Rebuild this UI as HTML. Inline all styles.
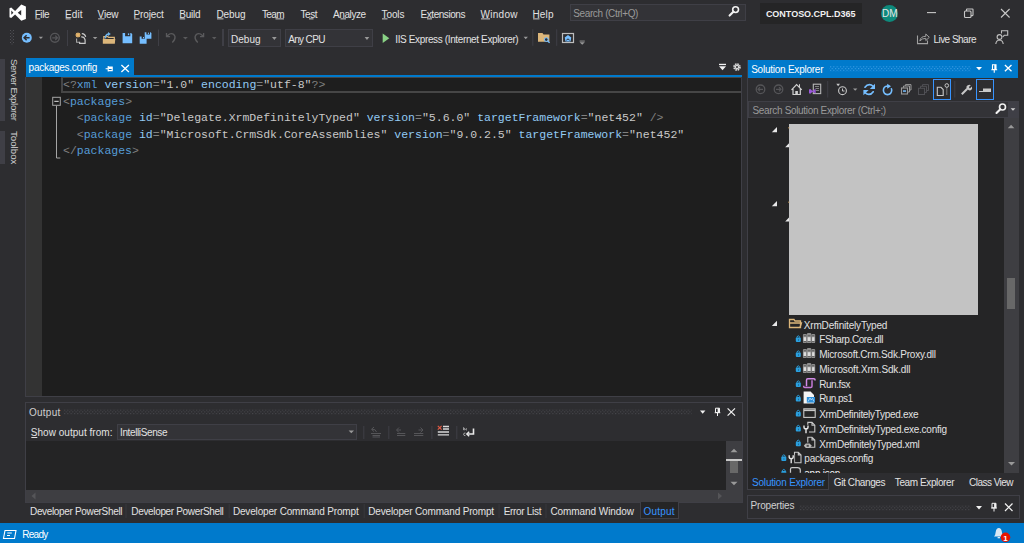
<!DOCTYPE html>
<html><head><meta charset="utf-8">
<style>
*{margin:0;padding:0;box-sizing:border-box}
html,body{width:1024px;height:543px;overflow:hidden;background:#2d2d30}
body{position:relative;font-family:"Liberation Sans",sans-serif;color:#f1f1f1}
.a{position:absolute}
.t{position:absolute;white-space:pre;line-height:1;font-size:10px}
.code{position:absolute;left:63px;top:77.4px;font-family:"Liberation Mono",monospace;font-size:11.5px;line-height:16.4px;white-space:pre;color:#c8c8c8}
.g{color:#808080}.b{color:#569cd6}.at{color:#92caf4}
.dotb{background-image:radial-gradient(circle,rgba(140,200,255,.55) 0.55px,transparent 0.95px);background-size:3px 3px}
.dotg{background-image:radial-gradient(circle,rgba(90,90,96,.9) 0.55px,transparent 0.95px);background-size:3px 3px}
svg{position:absolute;left:0;top:0}
</style></head><body>

<!-- ===== Title bar panels ===== -->
<div class="a" style="left:570px;top:4px;width:176px;height:17px;background:#333337;border:1px solid #3f3f46"></div>
<div class="a" style="left:760px;top:3px;width:102px;height:21px;background:#252526"></div>
<div class="a" style="left:881px;top:5px;width:17px;height:17px;border-radius:50%;background:#0e8a7c"></div>

<!-- ===== Toolbar panels ===== -->
<div class="a" style="left:228px;top:29px;width:53px;height:18px;background:#333337;border:1px solid #3f3f46"></div>
<div class="a" style="left:285px;top:29px;width:88px;height:18px;background:#333337;border:1px solid #3f3f46"></div>

<!-- ===== Left strip ===== -->
<div class="a" style="left:0;top:59px;width:5px;height:62px;background:#3f3f46"></div>
<div class="a" style="left:0;top:131px;width:5px;height:33px;background:#3f3f46"></div>
<span class="t" style="left:18.5px;top:59px;transform-origin:0 0;transform:rotate(90deg);font-size:9.7px;color:#d0d0d0;letter-spacing:-0.38px">Server Explorer</span>
<span class="t" style="left:18.5px;top:131px;transform-origin:0 0;transform:rotate(90deg);font-size:9.7px;color:#d0d0d0;letter-spacing:0px">Toolbox</span>

<!-- ===== Editor ===== -->
<div class="a" style="left:25px;top:77px;width:717px;height:320px;background:#1e1e1e;border:1px solid #3f3f46;border-top:none"></div>
<div class="a" style="left:26px;top:77px;width:16px;height:319px;background:#333333"></div>
<div class="a" style="left:26px;top:58px;width:108px;height:17px;background:#007acc"></div>
<div class="a" style="left:26px;top:75px;width:716px;height:2px;background:#007acc"></div>
<div class="a" style="left:61px;top:77px;width:680px;height:16px;border:2px solid #464646;border-right:none;border-top-width:1.6px"></div>
<div class="code"><span class="g">&lt;?</span><span class="b">xml</span> <span class="at">version</span><span class="g">=</span>"1.0" <span class="at">encoding</span><span class="g">=</span>"utf-8"<span class="g">?&gt;</span>
<span class="g">&lt;</span><span class="b">packages</span><span class="g">&gt;</span>
  <span class="g">&lt;</span><span class="b">package</span> <span class="at">id</span><span class="g">=</span>"Delegate.XrmDefinitelyTyped" <span class="at">version</span><span class="g">=</span>"5.6.0" <span class="at">targetFramework</span><span class="g">=</span>"net452" <span class="g">/&gt;</span>
  <span class="g">&lt;</span><span class="b">package</span> <span class="at">id</span><span class="g">=</span>"Microsoft.CrmSdk.CoreAssemblies" <span class="at">version</span><span class="g">=</span>"9.0.2.5" <span class="at">targetFramework</span><span class="g">=</span>"net452"
<span class="g">&lt;/</span><span class="b">packages</span><span class="g">&gt;</span></div>

<!-- ===== Output ===== -->
<div class="a" style="left:25px;top:402px;width:718px;height:101px;background:#2d2d30;border:1px solid #3f3f46"></div>
<div class="a" style="left:117px;top:424px;width:240px;height:16px;background:#333337;border:1px solid #3f3f46"></div>
<div class="a" style="left:26px;top:441px;width:700px;height:49px;background:#242425"></div>
<div class="a" style="left:26px;top:490px;width:716px;height:12px;background:#3e3e42"></div>
<div class="a" style="left:726px;top:441px;width:16px;height:49px;background:#3e3e42"></div>
<div class="a" style="left:730px;top:460px;width:8px;height:13px;background:#686868"></div>
<div class="a" style="left:726px;top:459px;width:16px;height:1.5px;background:#c8c8c8"></div>
<div class="a" style="left:640px;top:502px;width:39px;height:17px;background:#252526;border:1px solid #3f3f46;border-top:none"></div>

<!-- ===== Status bar ===== -->
<div class="a" style="left:0;top:523px;width:1024px;height:20px;background:#007acc"></div>

<!-- ===== Solution Explorer ===== -->
<div class="a" style="left:747px;top:60px;width:272px;height:430px;background:#2d2d30;border-left:1px solid #3f3f46"></div>
<div class="a" style="left:828px;top:472px;width:176px;height:1px;background:#3f3f46"></div>
<div class="a" style="left:748px;top:60px;width:270px;height:18px;background:#007acc"></div>
<div class="a" style="left:933px;top:79px;width:18px;height:21px;border:1px solid #3794ff"></div>
<div class="a" style="left:976px;top:79px;width:18px;height:21px;border:1px solid #3794ff"></div>
<div class="a" style="left:748px;top:101px;width:271px;height:17px;background:#333337;border:1px solid #3f3f46"></div>
<div class="a" style="left:1008px;top:102px;width:10px;height:15px;background:#3f3f46"></div>
<div class="a" style="left:748px;top:118px;width:271px;height:355px;background:#252526"></div>
<div class="a" style="left:789px;top:124px;width:189px;height:191px;background:#c3c3c3"></div>
<div class="a" style="left:1004px;top:118px;width:15px;height:354.5px;background:#3e3e42"></div>
<div class="a" style="left:1007px;top:278px;width:8px;height:31px;background:#686868"></div>
<div class="a" style="left:747px;top:473px;width:82px;height:17px;background:#252526;border:1px solid #3f3f46;border-top:none"></div>

<!-- Properties -->
<div class="a" style="left:747px;top:495px;width:273px;height:24px;background:#2d2d30;border:1px solid #3f3f46"></div>

<span class="t" style="left:34.7px;top:9.5px;letter-spacing:-0.44px;color:#e2e2e2;">File</span>
<span class="t" style="left:65.1px;top:9.5px;letter-spacing:0.06px;color:#e2e2e2;">Edit</span>
<span class="t" style="left:97.6px;top:9.5px;letter-spacing:-0.20px;color:#e2e2e2;">View</span>
<span class="t" style="left:133.5px;top:9.5px;letter-spacing:-0.14px;color:#e2e2e2;">Project</span>
<span class="t" style="left:179.2px;top:9.5px;letter-spacing:-0.23px;color:#e2e2e2;">Build</span>
<span class="t" style="left:216.5px;top:9.5px;letter-spacing:-0.12px;color:#e2e2e2;">Debug</span>
<span class="t" style="left:262.0px;top:9.5px;letter-spacing:-0.65px;color:#e2e2e2;">Team</span>
<span class="t" style="left:300.5px;top:9.5px;letter-spacing:-0.45px;color:#e2e2e2;">Test</span>
<span class="t" style="left:333.1px;top:9.5px;letter-spacing:-0.43px;color:#e2e2e2;">Analyze</span>
<span class="t" style="left:381.5px;top:9.5px;letter-spacing:-0.09px;color:#e2e2e2;">Tools</span>
<span class="t" style="left:420.5px;top:9.5px;letter-spacing:-0.44px;color:#e2e2e2;">Extensions</span>
<span class="t" style="left:480.5px;top:9.5px;letter-spacing:0.29px;color:#e2e2e2;">Window</span>
<span class="t" style="left:532.5px;top:9.5px;letter-spacing:0.14px;color:#e2e2e2;">Help</span>
<span class="t" style="left:573.2px;top:8.9px;letter-spacing:-0.36px;color:#999999;">Search (Ctrl+Q)</span>
<span class="t" style="left:765.9px;top:10.3px;letter-spacing:-0.02px;color:#f1f1f1;font-weight:bold;font-size:9px">CONTOSO.CPL.D365</span>
<span class="t" style="left:882.0px;top:9.2px;letter-spacing:0.15px;color:#e6e6e6;">DM</span>
<span class="t" style="left:231.1px;top:34.7px;letter-spacing:-0.02px;color:#e2e2e2;">Debug</span>
<span class="t" style="left:288.2px;top:34.7px;letter-spacing:-0.65px;color:#e2e2e2;">Any CPU</span>
<span class="t" style="left:395.3px;top:34.7px;letter-spacing:-0.37px;color:#e2e2e2;">IIS Express (Internet Explorer)</span>
<span class="t" style="left:933.4px;top:34.6px;letter-spacing:-0.52px;color:#e2e2e2;">Live Share</span>
<span class="t" style="left:28.6px;top:63.1px;letter-spacing:-0.26px;color:#ffffff;">packages.config</span>
<span class="t" style="left:751.2px;top:64.9px;letter-spacing:-0.24px;color:#ffffff;">Solution Explorer</span>
<span class="t" style="left:752.5px;top:105.9px;letter-spacing:-0.33px;color:#999999;">Search Solution Explorer (Ctrl+;)</span>
<span class="t" style="left:803.8px;top:320.5px;letter-spacing:-0.18px;color:#e2e2e2;">XrmDefinitelyTyped</span>
<span class="t" style="left:819.2px;top:335.1px;letter-spacing:-0.41px;color:#e2e2e2;">FSharp.Core.dll</span>
<span class="t" style="left:819.2px;top:350.0px;letter-spacing:-0.22px;color:#e2e2e2;">Microsoft.Crm.Sdk.Proxy.dll</span>
<span class="t" style="left:819.2px;top:364.9px;letter-spacing:-0.16px;color:#e2e2e2;">Microsoft.Xrm.Sdk.dll</span>
<span class="t" style="left:819.2px;top:379.7px;letter-spacing:-0.43px;color:#e2e2e2;">Run.fsx</span>
<span class="t" style="left:819.2px;top:394.3px;letter-spacing:-0.56px;color:#e2e2e2;">Run.ps1</span>
<span class="t" style="left:819.2px;top:409.8px;letter-spacing:-0.30px;color:#e2e2e2;">XrmDefinitelyTyped.exe</span>
<span class="t" style="left:819.2px;top:424.6px;letter-spacing:-0.26px;color:#e2e2e2;">XrmDefinitelyTyped.exe.config</span>
<span class="t" style="left:819.2px;top:439.5px;letter-spacing:-0.21px;color:#e2e2e2;">XrmDefinitelyTyped.xml</span>
<span class="t" style="left:804.3px;top:454.1px;letter-spacing:-0.23px;color:#e2e2e2;">packages.config</span>
<span class="t" style="left:752.0px;top:477.8px;letter-spacing:-0.19px;color:#3794ff;">Solution Explorer</span>
<span class="t" style="left:833.8px;top:477.8px;letter-spacing:-0.39px;color:#e2e2e2;">Git Changes</span>
<span class="t" style="left:894.8px;top:477.8px;letter-spacing:-0.40px;color:#e2e2e2;">Team Explorer</span>
<span class="t" style="left:969.1px;top:477.8px;letter-spacing:-0.54px;color:#e2e2e2;">Class View</span>
<span class="t" style="left:750.5px;top:501.3px;letter-spacing:-0.18px;color:#d0d0d0;">Properties</span>
<span class="t" style="left:29.0px;top:408.0px;letter-spacing:0.24px;color:#d0d0d0;">Output</span>
<span class="t" style="left:30.8px;top:428.1px;letter-spacing:0.03px;color:#e2e2e2;">Show output from:</span>
<span class="t" style="left:120.0px;top:428.1px;letter-spacing:-0.38px;color:#e2e2e2;">IntelliSense</span>
<span class="t" style="left:30.0px;top:506.7px;letter-spacing:-0.34px;color:#e2e2e2;">Developer PowerShell</span>
<span class="t" style="left:131.3px;top:506.7px;letter-spacing:-0.34px;color:#e2e2e2;">Developer PowerShell</span>
<span class="t" style="left:232.9px;top:506.7px;letter-spacing:-0.16px;color:#e2e2e2;">Developer Command Prompt</span>
<span class="t" style="left:368.3px;top:506.7px;letter-spacing:-0.16px;color:#e2e2e2;">Developer Command Prompt</span>
<span class="t" style="left:503.7px;top:506.7px;letter-spacing:-0.31px;color:#e2e2e2;">Error List</span>
<span class="t" style="left:550.4px;top:506.7px;letter-spacing:-0.06px;color:#e2e2e2;">Command Window</span>
<span class="t" style="left:643.5px;top:506.7px;letter-spacing:0.20px;color:#3794ff;">Output</span>
<span class="t" style="left:22.3px;top:530.0px;letter-spacing:-0.73px;color:#ffffff;">Ready</span>
<div class="a" style="left:748px;top:118px;width:256px;height:354.7px;overflow:hidden"><span class="t" style="left:56.3px;top:351px;letter-spacing:-0.25px;color:#f1f1f1">app.json</span></div>

<svg width="1024" height="543" viewBox="0 0 1024 543">
<defs>
<pattern id="pb" patternUnits="userSpaceOnUse" x="830" y="66.3" width="3.3" height="3.5"><rect x="0" y="0" width="1.1" height="1.1" fill="rgba(120,190,255,0.5)"/><rect x="1.65" y="1.75" width="1.1" height="1.1" fill="rgba(120,190,255,0.5)"/></pattern>
<pattern id="pg" patternUnits="userSpaceOnUse" x="64" y="409.6" width="3.3" height="3.5"><rect x="0" y="0" width="1.1" height="1.1" fill="rgba(80,80,86,0.75)"/><rect x="1.65" y="1.75" width="1.1" height="1.1" fill="rgba(80,80,86,0.75)"/></pattern>
<pattern id="pg2" patternUnits="userSpaceOnUse" x="800" y="505.6" width="3.3" height="3.5"><rect x="0" y="0" width="1.1" height="1.1" fill="rgba(80,80,86,0.75)"/><rect x="1.65" y="1.75" width="1.1" height="1.1" fill="rgba(80,80,86,0.75)"/></pattern>
</defs>
<rect x="829.5" y="66" width="141" height="5.4" fill="url(#pb)"/>
<rect x="63.5" y="409.3" width="628" height="5.4" fill="url(#pg)"/>
<rect x="799.5" y="505.3" width="171" height="5.4" fill="url(#pg2)"/>
<!-- VS logo -->
<path fill="#fff" fill-rule="evenodd" d="M21.3 4.6 L25.9 6.5 V18.9 L21.3 20.8 L15.1 14.4 L11.2 17.9 L9.5 17.2 V8.2 L11.2 7.5 L15.1 11 Z M21.2 9.9 V15.5 L17.7 12.7 Z M11.3 10.6 V14.8 L13.4 12.7 Z"/>
<!-- menu access key underlines -->
<g fill="#f1f1f1">
<rect x="35.2" y="18.5" width="5" height="0.8"/>
<rect x="65.6" y="18.5" width="5" height="0.8"/>
<rect x="98.1" y="18.5" width="6.5" height="0.8"/>
<rect x="134" y="18.5" width="5.5" height="0.8"/>
<rect x="179.7" y="18.5" width="5.5" height="0.8"/>
<rect x="217" y="18.5" width="6.5" height="0.8"/>
<rect x="275.5" y="18.5" width="8.5" height="0.8"/>
<rect x="309" y="18.5" width="4.5" height="0.8"/>
<rect x="340.5" y="18.5" width="5.5" height="0.8"/>
<rect x="382" y="18.5" width="5.5" height="0.8"/>
<rect x="427" y="18.5" width="5" height="0.8"/>
<rect x="481" y="18.5" width="9" height="0.8"/>
<rect x="533" y="18.5" width="6.5" height="0.8"/>
</g>
<!-- search icon -->
<circle cx="735.6" cy="9.6" r="2.9" fill="none" stroke="#f1f1f1" stroke-width="1.6"/>
<path d="M733.4 11.8 L729.6 15.6" stroke="#f1f1f1" stroke-width="2.1" stroke-linecap="round"/>
<!-- window controls -->
<path d="M927 12.6 H936" stroke="#c8c8c8" stroke-width="1.1"/>
<rect x="964.5" y="11" width="6.5" height="6.5" fill="none" stroke="#c8c8c8" stroke-width="1.1" rx="1"/>
<path d="M966.5 11 V9.6 Q966.5 9 967.1 9 H972.4 Q973 9 973 9.6 V15 Q973 15.6 972.4 15.6 H971" fill="none" stroke="#c8c8c8" stroke-width="1.1"/>
<path d="M1001 9 L1009.6 17.5 M1009.6 9 L1001 17.5" stroke="#c8c8c8" stroke-width="1.1"/>

<!-- ===== toolbar ===== -->
<g fill="#505055">
<rect x="10" y="30" width="1" height="1"/><rect x="13" y="30" width="1" height="1"/>
<rect x="11.5" y="31.5" width="1" height="1"/>
<rect x="10" y="33" width="1" height="1"/><rect x="13" y="33" width="1" height="1"/>
<rect x="11.5" y="34.5" width="1" height="1"/>
<rect x="10" y="36" width="1" height="1"/><rect x="13" y="36" width="1" height="1"/>
<rect x="11.5" y="37.5" width="1" height="1"/>
<rect x="10" y="39" width="1" height="1"/><rect x="13" y="39" width="1" height="1"/>
<rect x="11.5" y="40.5" width="1" height="1"/>
<rect x="10" y="42" width="1" height="1"/><rect x="13" y="42" width="1" height="1"/>
<rect x="11.5" y="43.5" width="1" height="1"/>
</g>
<circle cx="26.8" cy="37.8" r="5" fill="#75beff"/>
<path d="M29.6 37.8 H24.2 M26.6 35.3 L24.1 37.8 L26.6 40.3" fill="none" stroke="#2d2d30" stroke-width="1.5"/>
<path d="M38.8 36.8 H43 L40.9 39.1 Z" fill="#999"/>
<circle cx="54.9" cy="37.8" r="4.4" fill="none" stroke="#555558" stroke-width="1.4"/>
<path d="M52.3 37.8 H57.4 M55.3 35.6 L57.4 37.8 L55.3 40" fill="none" stroke="#555558" stroke-width="1.3"/>
<rect x="67" y="30" width="1" height="16" fill="#3f3f46"/>
<!-- new project -->
<path d="M78.00 31.90 L78.73 33.24 L80.19 32.81 L79.76 34.27 L81.10 35.00 L79.76 35.73 L80.19 37.19 L78.73 36.76 L78.00 38.10 L77.27 36.76 L75.81 37.19 L76.24 35.73 L74.90 35.00 L76.24 34.27 L75.81 32.81 L77.27 33.24 Z" fill="#e3b46c"/>
<path d="M81.8 33.6 Q84.8 33.4 85.7 36.8" fill="none" stroke="#c8c8c8" stroke-width="1.2"/>
<path d="M81.2 36.9 Q84.3 36.7 85.1 39.8 V43.4 H79.6 V41.8" fill="none" stroke="#c8c8c8" stroke-width="1.2"/>
<path d="M76.6 38.6 V42.2 H79.2" fill="none" stroke="#a8a8a8" stroke-width="1.1"/>
<path d="M92.8 37 H97.4 L95.1 39.3 Z" fill="#999"/>
<!-- open -->
<path d="M103.8 39.5 V36.6 H107.8 L108.6 37.4 H114.3 V39.5" fill="none" stroke="#dcb67a" stroke-width="1.2"/>
<path d="M102.8 39 H115.3 L114.8 43.7 H102.8 Z" fill="#dcb67a"/>
<path d="M105.4 38.4 Q105.2 34.6 108.5 34" fill="none" stroke="#6fb3ea" stroke-width="1.5"/>
<path d="M108 31.9 L110.8 34 L108 36.1 Z" fill="#6fb3ea"/>
<!-- save -->
<path d="M122.6 32.9 H131 L132.2 34.1 V43.2 H122.6 Z M125.1 32.9 V36.3 H130.3 V32.9 Z" fill="#75beff" fill-rule="evenodd"/>
<rect x="127.9" y="33.4" width="1.3" height="1.7" fill="#75beff"/>
<!-- save all -->
<path d="M144.7 32.2 H150.5 L151.4 33.1 V38.8 H144.7 Z M146.4 32.2 V34.6 H150 V32.2 Z" fill="#75beff" fill-rule="evenodd"/>
<rect x="147.9" y="32.6" width="1" height="1.4" fill="#75beff"/>
<path d="M139.7 36.6 H145.8 L146.6 37.4 V43.7 H139.7 Z M141.6 36.6 V38.8 H145 V36.6 Z" fill="#75beff" fill-rule="evenodd"/>
<rect x="143" y="37" width="1" height="1.3" fill="#75beff"/>
<rect x="158" y="29.5" width="1" height="16.5" fill="#3f3f46"/>
<!-- undo / redo -->
<path d="M166.5 33 V36.6 H170.1 M166.8 36.3 L169.5 34 Q173.5 32.8 175 36.5 Q175.5 39.5 172.3 42.5" fill="none" stroke="#5a5a5c" stroke-width="1.3"/>
<path d="M183 36.9 H187.8 L185.4 39.5 Z" fill="#5a5a5c"/>
<path d="M203.6 33 V36.6 H200 M203.3 36.3 L200.6 34 Q196.6 32.8 195.1 36.5 Q194.6 39.5 197.8 42.5" fill="none" stroke="#5a5a5c" stroke-width="1.3"/>
<path d="M212 36.9 H216.5 L214.25 39.5 Z" fill="#5a5a5c"/>
<rect x="222" y="29" width="2" height="17" fill="#3f3f46"/>
<path d="M272 37 H276.7 L274.35 40 Z" fill="#999"/>
<path d="M364.6 37 H369.3 L366.95 40 Z" fill="#999"/>
<!-- play -->
<path d="M382.7 33.6 L389.3 38.35 L382.7 43.1 Z" fill="#89d185"/>
<path d="M523.6 36.8 H527.9 L525.75 39.2 Z" fill="#999"/>
<rect x="532.3" y="29.3" width="1" height="16.5" fill="#3f3f46"/>
<!-- folder search -->
<path d="M538 33 H542.5 L543.5 34.5 H549.4 V41.8 H538 Z" fill="#dcb67a"/>
<circle cx="546.3" cy="39.6" r="1.9" fill="#2d2d30" stroke="#75beff" stroke-width="1.1"/>
<path d="M547.7 41 L549.6 42.9" stroke="#75beff" stroke-width="1.3"/>
<rect x="556.2" y="29.3" width="1" height="16.5" fill="#3f3f46"/>
<!-- browser -->
<rect x="562.5" y="33.5" width="11" height="9" fill="none" stroke="#bdbdbd" stroke-width="1.2"/>
<path d="M568 35 L571.3 37.6 L570.5 41.5 H565.5 L564.7 37.6 Z" fill="#75beff"/>
<path d="M566.3 40.2 Q568 37.6 569.7 40.2" fill="none" stroke="#2d2d30" stroke-width="1"/>
<rect x="579.6" y="40.6" width="5.2" height="0.9" fill="#999"/>
<path d="M579.6 42.2 H584.8 L582.2 44.8 Z" fill="#999"/>
<!-- live share -->
<path d="M917.5 35.5 V43.6 H927.5 V40.5" fill="none" stroke="#a0a0a0" stroke-width="1.1"/>
<path d="M919.8 41 Q920.5 36.3 925.8 36.3 V34 L929.3 37.3 L925.8 40.6 V38.3 Q922 38.3 919.8 41 Z" fill="none" stroke="#a0a0a0" stroke-width="1"/>
<!-- feedback -->
<circle cx="999.5" cy="37" r="2.4" fill="none" stroke="#c0c0c0" stroke-width="1.1"/>
<path d="M995.8 44 Q996.2 40.3 999.5 40 Q1002.8 40.3 1003.2 44" fill="none" stroke="#c0c0c0" stroke-width="1.1"/>
<path d="M1001.5 33.5 V30.8 H1007.7 V35.3 H1004.3 L1002.7 36.8" fill="none" stroke="#c0c0c0" stroke-width="1.1"/>

<!-- ===== doc tab ===== -->
<path d="M105.6 68.8 H108.2 M108.2 66 V71.6 M108.2 67 H112.2 V70.6 H108.2" fill="none" stroke="#fff" stroke-width="1.1"/>
<rect x="108.2" y="67" width="4" height="2" fill="#fff"/>
<path d="M121.4 65 L128.9 71.9 M128.9 65 L121.4 71.9" stroke="#fff" stroke-width="1.3"/>
<!-- editor header icons -->
<rect x="719" y="63.8" width="7" height="1.3" fill="#f1f1f1"/>
<path d="M719 66.2 H726 L722.5 70.2 Z" fill="#f1f1f1"/>
<circle cx="737" cy="67" r="2.6" fill="none" stroke="#d8d8d8" stroke-width="2.4" stroke-dasharray="1.4 0.63"/>
<circle cx="737" cy="67" r="1.6" fill="none" stroke="#d8d8d8" stroke-width="1.2"/>
<!-- outlining -->
<rect x="52.7" y="97.3" width="7.6" height="8" fill="none" stroke="#a5a5a5" stroke-width="1"/>
<rect x="54.3" y="100.8" width="4.4" height="1.1" fill="#d0d0d0"/>
<path d="M56.5 105.8 V158 H60.3" fill="none" stroke="#a5a5a5" stroke-width="1"/>

<!-- ===== output header ===== -->
<path d="M700 410.5 H705.4 L702.7 413.8 Z" fill="#f1f1f1"/>
<path d="M715.5 408.2 H719.5 V412.5 H715.5 Z M714.7 412.7 H720.3 M717.5 412.7 V416" fill="none" stroke="#f1f1f1" stroke-width="1"/><rect x="717.6" y="408.2" width="1.9" height="4.3" fill="#f1f1f1"/>
<path d="M727.6 408.4 L735 415.6 M735 408.4 L727.6 415.6" stroke="#f1f1f1" stroke-width="1.2"/>
<!-- output toolbar -->

<rect x="31.3" y="437" width="6" height="0.9" fill="#f1f1f1"/>
<path d="M348.6 430.5 H354 L351.3 433.3 Z" fill="#999"/>
<rect x="363.3" y="426" width="1" height="13" fill="#3f3f46"/>
<path d="M374 427 L371.5 429.3 L374 431.6 M371.8 429.3 Q376 429 376.5 432 M371 433.5 H381 M372.5 435.5 H380 M372.5 437 H380" fill="none" stroke="#555558" stroke-width="1"/>
<rect x="388.3" y="426" width="1" height="13" fill="#3f3f46"/>
<path d="M399 427.5 L396.5 430 L399 432.5 M396.8 430 H401 M397 433.5 H405.3 M397 435.5 H405.3" fill="none" stroke="#555558" stroke-width="1"/>
<path d="M420.5 427.5 L423 430 L420.5 432.5 M422.8 430 H418.5 M414 433.5 H423.3 M414 435.5 H423.3" fill="none" stroke="#555558" stroke-width="1"/>
<rect x="431.4" y="426" width="1" height="13" fill="#3f3f46"/>
<path d="M437.8 425.8 L441.6 429.6 M441.6 425.8 L437.8 429.6" stroke="#e05a44" stroke-width="1.2"/>
<path d="M443 426.5 H449 M443 429 H449 M437.8 432 H449 M437.8 434.8 H449" stroke="#d8d8d8" stroke-width="1.3"/>
<rect x="456.3" y="426" width="1" height="13" fill="#3f3f46"/>
<path d="M473.5 428.5 V434 H467" fill="none" stroke="#e8e8e8" stroke-width="1.6"/>
<path d="M469.2 431.8 L466.8 434 L469.2 436.2" fill="none" stroke="#e8e8e8" stroke-width="1.4"/>
<path d="M463.6 427.2 V430 M463.6 428.8 Q465 428 465 429.2 Q465 430.2 463.6 429.8 M466.8 428.6 Q465.8 428.6 465.8 429.4 Q465.8 430.2 467 430" fill="none" stroke="#b8b8b8" stroke-width="0.8"/>
<path d="M465.4 433 Q463.6 432.8 463.6 434.3 Q463.6 435.8 465.4 435.6" fill="none" stroke="#b8b8b8" stroke-width="0.9"/>
<!-- output scrollbars -->
<path d="M730.5 452.3 H737.5 L734 448.8 Z" fill="#999"/>
<path d="M730.5 481.8 H737.5 L734 485.3 Z" fill="#999"/>
<path d="M35.5 492.5 V499.5 L31.5 496 Z" fill="#555558"/>
<path d="M718 492.5 V499.5 L722 496 Z" fill="#555558"/>
<!-- bottom tab separators -->
<g fill="#38383d">
<rect x="125.5" y="504" width="1" height="14"/>
<rect x="228.7" y="504" width="1" height="14"/>
<rect x="363.7" y="504" width="1" height="14"/>
<rect x="498.6" y="504" width="1" height="14"/>
<rect x="545.5" y="504" width="1" height="14"/>
</g>

<!-- ===== status bar ===== -->
<path d="M5 530.5 H16 L14.5 538.5 H3.5 Z" fill="none" stroke="#fff" stroke-width="1.1"/>
<path d="M7.3 533 H11.8 M7 535.5 H10" stroke="#fff" stroke-width="1"/>
<path d="M994 536.5 Q995.5 535 995.8 531.5 Q996.3 528 998.8 528 Q1001.3 528 1001.8 531.5 Q1002.1 535 1003.6 536.5 Z" fill="#d8e8f4"/>
<rect x="997.6" y="537" width="2.4" height="1.3" fill="#d8e8f4"/>
<circle cx="1005.5" cy="537.3" r="4.8" fill="#e51400"/>
<text x="1005.5" y="540.8" font-family="Liberation Sans" font-size="8" font-weight="bold" fill="#fff" text-anchor="middle">1</text>

<!-- ===== SE header ===== -->
<path d="M976.1 67 H982 L979.05 70.2 Z" fill="#fff"/>
<path d="M992.5 64.8 H996 V69.5 H992.5 Z M991.3 69.8 H997.2 M994.25 69.8 V72.8" fill="none" stroke="#fff" stroke-width="1.1"/>
<rect x="994.3" y="64.8" width="1.7" height="4.7" fill="#fff"/>
<path d="M1004.9 65 L1011.5 71.3 M1011.5 65 L1004.9 71.3" stroke="#fff" stroke-width="1.3"/>
<!-- SE toolbar -->
<circle cx="760.5" cy="89.3" r="4.3" fill="none" stroke="#555558" stroke-width="1.3"/>
<path d="M763 89.3 H758 M760 87.2 L758 89.3 L760 91.4" fill="none" stroke="#555558" stroke-width="1.2"/>
<circle cx="778.5" cy="89.3" r="4.3" fill="none" stroke="#555558" stroke-width="1.3"/>
<path d="M776 89.3 H781 M779 87.2 L781 89.3 L779 91.4" fill="none" stroke="#555558" stroke-width="1.2"/>
<path d="M791.5 89.8 L796.6 84.6 L801.8 89.8 M793 88.5 V94.5 H800.3 V88.5" fill="none" stroke="#d0d0d0" stroke-width="1.2"/>
<rect x="795.3" y="91" width="2.6" height="3.5" fill="#d0d0d0"/>
<path d="M799.5 84.2 V87" stroke="#d0d0d0" stroke-width="1"/>
<rect x="813.3" y="84.2" width="7.4" height="9.4" fill="none" stroke="#b8b8b8" stroke-width="1.1"/>
<path d="M815 86.5 H819 M815.5 88.5 H819 M815.5 90.5 H819" stroke="#8a8a8a" stroke-width="0.9"/>
<path d="M809 89.5 L810.3 89 L812.5 91 L815.5 88.8 L815.8 93.5 L812.5 91.8 L810.3 93.8 L809 93.3 Z" fill="#9b59d9"/>
<rect x="827.2" y="81" width="1" height="16.5" fill="#3f3f46"/>
<path d="M836.3 83.7 H840 L838.15 86.3 Z" fill="#c8c8c8"/>
<circle cx="842.5" cy="90.7" r="3.9" fill="none" stroke="#c8c8c8" stroke-width="1.1"/>
<path d="M842.5 88.5 V91 H844.5" fill="none" stroke="#c8c8c8" stroke-width="1"/>
<path d="M853 88.4 H857.4 L855.2 90.8 Z" fill="#999"/>
<path d="M865 87.2 Q866.8 84.6 869.5 84.6 Q871.5 84.6 872.8 86" fill="none" stroke="#75beff" stroke-width="1.7" stroke-linecap="round"/>
<path d="M875 83.8 V89 H869.8 Z" fill="#75beff"/>
<path d="M873.2 91.8 Q871.6 94.4 868.8 94.4 Q866.8 94.4 865.5 93" fill="none" stroke="#75beff" stroke-width="1.7" stroke-linecap="round"/>
<path d="M863.4 90 H868.6 L863.4 95.2 Z" fill="#75beff"/>
<path d="M888.6 86.2 Q888 86 887.5 86 Q883.5 86.2 883.4 90.3 Q883.6 94.5 887.5 94.6 Q891.5 94.5 891.7 90.3 Q891.7 89.5 891.4 88.8" fill="none" stroke="#75beff" stroke-width="1.6" stroke-linecap="round"/>
<path d="M887.2 83.7 L891 86.2 L887.2 88.7 Z" fill="#75beff"/>
<rect x="901.5" y="88" width="6" height="6" fill="none" stroke="#9a9a9a" stroke-width="1.1"/>
<path d="M903.5 87.8 V86 H909.5 V92 H907.6 M905.5 85.8 V84.6 H911 V90 H909.6" fill="none" stroke="#9a9a9a" stroke-width="1"/>
<rect x="903" y="90.3" width="3" height="1.5" fill="#75beff"/>
<rect x="918.5" y="88.3" width="6" height="6.2" fill="none" stroke="#505055" stroke-width="1"/>
<path d="M920.5 88 V86.3 H926.5 V92.4 H924.8 M922.5 86 V84.6 H928.5 V90.5 H926.8" fill="none" stroke="#505055" stroke-width="1"/>
<path d="M937.3 87.3 H941 L943.2 89.5 V95.5 H937.3 Z" fill="none" stroke="#c8c8c8" stroke-width="1.1"/>
<circle cx="946.8" cy="85.5" r="1.8" fill="none" stroke="#c8c8c8" stroke-width="1"/>
<path d="M946.8 87.5 V95" stroke="#c8c8c8" stroke-width="1" stroke-dasharray="1 1"/>
<rect x="954.3" y="81" width="1" height="16.5" fill="#3f3f46"/>
<path d="M961.8 94.3 L967.3 88.8" stroke="#c8c8c8" stroke-width="2"/>
<path d="M967 89 Q965.5 86.3 967.8 85.2 Q969.5 84.5 970.8 85.2 L968.9 87.1 L969.9 88.4 L971.8 86.5 Q972.8 88.5 971.2 90 Q969.5 91.3 967 89 Z" fill="#c8c8c8"/>
<rect x="979" y="91" width="8" height="1" fill="#c8c8c8"/>
<rect x="983" y="88.5" width="8" height="3.5" fill="#c8c8c8"/>
<!-- SE search -->
<circle cx="1002.5" cy="107" r="3" fill="none" stroke="#f1f1f1" stroke-width="1.6"/>
<path d="M1000.3 109.2 L996.5 113" stroke="#f1f1f1" stroke-width="2.1" stroke-linecap="round"/>
<path d="M1010.6 108.3 H1015.4 L1013 110.8 Z" fill="#d0d0d0"/>
<!-- SE scrollbar arrows -->
<path d="M1007.8 128.2 H1014.4 L1011.1 124.8 Z" fill="#999"/>
<path d="M1008 462 H1015 L1011.5 465.6 Z" fill="#999"/>
<!-- tree expanders -->
<g fill="#e8e8e8">
<path d="M777 127 V132.2 H771.8 Z"/>
<path d="M777 201 V206.2 H771.8 Z"/>
<path d="M789 143.2 V147.2 H785.2 Z"/>
<path d="M789 217.6 V221.6 H785.2 Z"/>
<path d="M777 320.8 V326 H771.8 Z"/>
</g>
<path d="M789.5 319.5 H794 L795 321 H800.5 V327.5 H789.5 Z" fill="none" stroke="#dcb67a" stroke-width="1.3"/>
<path d="M790 323 H801.5 L800 327.5" fill="none" stroke="#dcb67a" stroke-width="1.3"/>
<rect x="788.3" y="127" width="0.9" height="1.5" fill="#b08850"/><rect x="788.3" y="201.5" width="0.9" height="1.5" fill="#b08850"/>
<!-- locks -->
<g id="lk" fill="#3c9fd8">
</g>
<rect x="795.8" y="337.4" width="5" height="4.6" rx="1" fill="#2aa0df"/><path d="M796.9 337.6 V336.8 Q798.3 334.8 799.7 336.8 V337.6" fill="none" stroke="#2aa0df" stroke-width="1"/><rect x="798" y="339.2" width="0.8" height="1.6" fill="#1a5f88"/>
<rect x="795.8" y="352.4" width="5" height="4.6" rx="1" fill="#2aa0df"/><path d="M796.9 352.6 V351.8 Q798.3 349.8 799.7 351.8 V352.6" fill="none" stroke="#2aa0df" stroke-width="1"/><rect x="798" y="354.2" width="0.8" height="1.6" fill="#1a5f88"/>
<rect x="795.8" y="367.4" width="5" height="4.6" rx="1" fill="#2aa0df"/><path d="M796.9 367.6 V366.8 Q798.3 364.8 799.7 366.8 V367.6" fill="none" stroke="#2aa0df" stroke-width="1"/><rect x="798" y="369.2" width="0.8" height="1.6" fill="#1a5f88"/>
<rect x="795.8" y="382.4" width="5" height="4.6" rx="1" fill="#2aa0df"/><path d="M796.9 382.6 V381.8 Q798.3 379.8 799.7 381.8 V382.6" fill="none" stroke="#2aa0df" stroke-width="1"/><rect x="798" y="384.2" width="0.8" height="1.6" fill="#1a5f88"/>
<rect x="795.8" y="396.9" width="5" height="4.6" rx="1" fill="#2aa0df"/><path d="M796.9 397.1 V396.3 Q798.3 394.3 799.7 396.3 V397.1" fill="none" stroke="#2aa0df" stroke-width="1"/><rect x="798" y="398.7" width="0.8" height="1.6" fill="#1a5f88"/>
<rect x="795.8" y="411.9" width="5" height="4.6" rx="1" fill="#2aa0df"/><path d="M796.9 412.1 V411.3 Q798.3 409.3 799.7 411.3 V412.1" fill="none" stroke="#2aa0df" stroke-width="1"/><rect x="798" y="413.7" width="0.8" height="1.6" fill="#1a5f88"/>
<rect x="795.8" y="426.9" width="5" height="4.6" rx="1" fill="#2aa0df"/><path d="M796.9 427.1 V426.3 Q798.3 424.3 799.7 426.3 V427.1" fill="none" stroke="#2aa0df" stroke-width="1"/><rect x="798" y="428.7" width="0.8" height="1.6" fill="#1a5f88"/>
<rect x="795.8" y="441.7" width="5" height="4.6" rx="1" fill="#2aa0df"/><path d="M796.9 441.90000000000003 V441.1 Q798.3 439.1 799.7 441.1 V441.90000000000003" fill="none" stroke="#2aa0df" stroke-width="1"/><rect x="798" y="443.5" width="0.8" height="1.6" fill="#1a5f88"/>
<rect x="781.3" y="456.4" width="5" height="4.6" rx="1" fill="#2aa0df"/><path d="M782.4 456.6 V455.8 Q783.8 453.8 785.2 455.8 V456.6" fill="none" stroke="#2aa0df" stroke-width="1"/><rect x="783.5" y="458.2" width="0.8" height="1.6" fill="#1a5f88"/>
<!-- dll icons -->
<rect x="802.9" y="333.9" width="4" height="9.2" rx="1.2" fill="#8e8e8e"/><rect x="803.6999999999999" y="337.2" width="2.4" height="3.8" fill="#dcdcdc"/><rect x="803.6999999999999" y="335.3" width="2.4" height="0.9" fill="#5a5a5a"/><rect x="803.6999999999999" y="341.2" width="2.4" height="0.8" fill="#5a5a5a"/>
<rect x="806.9" y="333.1" width="4.4" height="10.0" rx="1.2" fill="#8e8e8e"/><rect x="807.6999999999999" y="337.2" width="2.8" height="3.8" fill="#dcdcdc"/><rect x="807.6999999999999" y="335.3" width="2.8" height="0.9" fill="#5a5a5a"/><rect x="807.6999999999999" y="341.2" width="2.8" height="0.8" fill="#5a5a5a"/>
<rect x="811.3" y="333.9" width="3.9" height="9.2" rx="1.2" fill="#8e8e8e"/><rect x="812.0999999999999" y="337.2" width="2.3" height="3.8" fill="#dcdcdc"/><rect x="812.0999999999999" y="335.3" width="2.3" height="0.9" fill="#5a5a5a"/><rect x="812.0999999999999" y="341.2" width="2.3" height="0.8" fill="#5a5a5a"/>
<rect x="802.9" y="348.9" width="4" height="9.2" rx="1.2" fill="#8e8e8e"/><rect x="803.6999999999999" y="352.2" width="2.4" height="3.8" fill="#dcdcdc"/><rect x="803.6999999999999" y="350.3" width="2.4" height="0.9" fill="#5a5a5a"/><rect x="803.6999999999999" y="356.2" width="2.4" height="0.8" fill="#5a5a5a"/>
<rect x="806.9" y="348.1" width="4.4" height="10.0" rx="1.2" fill="#8e8e8e"/><rect x="807.6999999999999" y="352.2" width="2.8" height="3.8" fill="#dcdcdc"/><rect x="807.6999999999999" y="350.3" width="2.8" height="0.9" fill="#5a5a5a"/><rect x="807.6999999999999" y="356.2" width="2.8" height="0.8" fill="#5a5a5a"/>
<rect x="811.3" y="348.9" width="3.9" height="9.2" rx="1.2" fill="#8e8e8e"/><rect x="812.0999999999999" y="352.2" width="2.3" height="3.8" fill="#dcdcdc"/><rect x="812.0999999999999" y="350.3" width="2.3" height="0.9" fill="#5a5a5a"/><rect x="812.0999999999999" y="356.2" width="2.3" height="0.8" fill="#5a5a5a"/>
<rect x="802.9" y="363.9" width="4" height="9.2" rx="1.2" fill="#8e8e8e"/><rect x="803.6999999999999" y="367.2" width="2.4" height="3.8" fill="#dcdcdc"/><rect x="803.6999999999999" y="365.3" width="2.4" height="0.9" fill="#5a5a5a"/><rect x="803.6999999999999" y="371.2" width="2.4" height="0.8" fill="#5a5a5a"/>
<rect x="806.9" y="363.1" width="4.4" height="10.0" rx="1.2" fill="#8e8e8e"/><rect x="807.6999999999999" y="367.2" width="2.8" height="3.8" fill="#dcdcdc"/><rect x="807.6999999999999" y="365.3" width="2.8" height="0.9" fill="#5a5a5a"/><rect x="807.6999999999999" y="371.2" width="2.8" height="0.8" fill="#5a5a5a"/>
<rect x="811.3" y="363.9" width="3.9" height="9.2" rx="1.2" fill="#8e8e8e"/><rect x="812.0999999999999" y="367.2" width="2.3" height="3.8" fill="#dcdcdc"/><rect x="812.0999999999999" y="365.3" width="2.3" height="0.9" fill="#5a5a5a"/><rect x="812.0999999999999" y="371.2" width="2.3" height="0.8" fill="#5a5a5a"/>
<!-- Run.fsx -->
<path d="M806.5 386.3 V380.2 Q806.5 378.8 807.8 378.8 H814 Q815 378.8 815 379.8 V380.4" fill="none" stroke="#d28be8" stroke-width="1.5"/>
<path d="M812 380.2 V386.2 Q812 387.4 810.7 387.4 H804.8 Q803.7 387.4 803.7 386.4 V385.8" fill="none" stroke="#c47ad8" stroke-width="1.5"/>
<!-- Run.ps1 -->
<path d="M803.6 391.5 H810.6 L814 394.9 V403.5 H803.6 Z" fill="#f4f4f4"/>
<path d="M806.8 397 H815 V402.6 H806.8 Z" fill="#2f8fd8"/>
<path d="M808 401.5 L810 398 L811.3 400 L812.5 398.3 L814 401.5" fill="none" stroke="#bfe3ff" stroke-width="0.8"/>
<!-- exe -->
<rect x="803.8" y="408.8" width="11.4" height="8.6" fill="none" stroke="#c8c8c8" stroke-width="1.1"/>
<rect x="804" y="409.5" width="11" height="1.6" fill="#c8c8c8"/>
<!-- exe.config -->
<path d="M807.8 432 V422.4 H812 L814.8 425.2 V432 Z M812 422.4 V425.2 H814.8" fill="none" stroke="#c8c8c8" stroke-width="1.1"/>
<rect x="803" y="424.8" width="6" height="8.6" fill="#252526"/>
<path d="M804 425.4 V427.2 Q804 428.8 806 428.8 Q808 428.8 808 427.2 V425.4 M806 428.8 V433.2" fill="none" stroke="#e6e6e6" stroke-width="1.4"/>
<!-- xml -->
<path d="M807.8 447.3 V437.2 H812 L814.8 440 V447.3 Z M812 437.2 V440 H814.8" fill="none" stroke="#c8c8c8" stroke-width="1.1"/>
<rect x="803.3" y="442.6" width="6" height="6" fill="#252526"/>
<path d="M803.8 445.8 L805.8 443.4 H809.6 L811.8 445.8 L809.6 448 H805.8 Z" fill="#b8b8b8"/>
<rect x="806.6" y="444.8" width="2.2" height="2" fill="#4a4a4a"/>
<!-- packages.config tree -->
<path d="M794.5 462.8 V452.2 H798.3 L801 454.9 V462.8 Z M798.3 452.2 V454.9 H801" fill="none" stroke="#c8c8c8" stroke-width="1.1"/>
<rect x="788.3" y="454.6" width="6" height="9" fill="#252526"/>
<path d="M789.2 455.3 V457.1 Q789.2 458.7 791.2 458.7 Q793.2 458.7 793.2 457.1 V455.3 M791.2 458.7 V463.2" fill="none" stroke="#e6e6e6" stroke-width="1.4"/>
<clipPath id="tc"><rect x="748" y="118" width="256" height="354.7"/></clipPath>
<g clip-path="url(#tc)"><path d="M790.5 473 V469 Q790.5 467.6 792 467.6 H797.5 Q800.3 467.6 800.3 470 V473" fill="none" stroke="#c8c8c8" stroke-width="1.2"/>
<rect x="781.3" y="471" width="5" height="4.6" rx="1" fill="#2aa0df"/><path d="M782.4 471.2 V470.4 Q783.8 468.4 785.2 470.4 V471.2" fill="none" stroke="#2aa0df" stroke-width="1"/></g>
<!-- properties header -->
<path d="M976 506 H982 L979 509.5 Z" fill="#f1f1f1"/>
<path d="M992 503.3 H996 V507.8 H992 Z M991 508 H997 M994 508 V511.5" fill="none" stroke="#f1f1f1" stroke-width="1"/><rect x="994.1" y="503.3" width="1.9" height="4.5" fill="#f1f1f1"/>
<path d="M1005 503.5 L1012.5 511 M1012.5 503.5 L1005 511" stroke="#f1f1f1" stroke-width="1.2"/>
</svg>

</body></html>
